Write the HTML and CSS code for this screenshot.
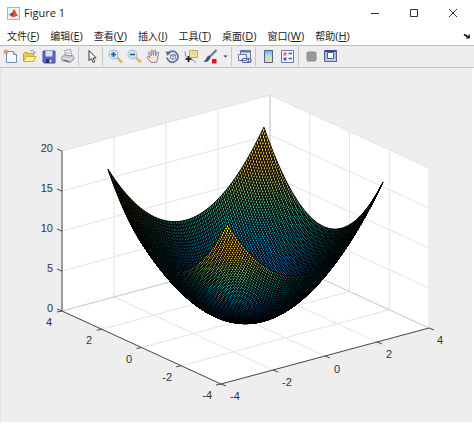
FILE: index.html
```html
<!DOCTYPE html>
<html lang="zh-CN">
<head>
<meta charset="utf-8">
<title>Figure 1</title>
<link rel="stylesheet" href="styles.css">
</head>
<body>
<header class="titlebar">
  <svg class="logo" viewBox="0 0 13 13" aria-hidden="true">
    <rect x=".5" y=".5" width="12" height="12" fill="#eef2f6" stroke="#a9b4c0"/>
    <path d="M1.5 7.8 4.6 6l1 1.5-1.5 1.3z" fill="#3b78a8"/>
    <path d="M4.6 6C6 5 6.500 2.500 7.400 2.200L6.500 8 5 10 4 8.800z" fill="#8c2f1c"/>
    <path d="M7.400 2.200C8.500 3 9.500 7 11.500 9.600 9.800 8.500 8.500 8.800 7 10.600L5 9.200C6.500 8 6.500 4 7.400 2.200z" fill="#dc5a22"/>
  </svg>
  <h1>Figure 1</h1>
  <div class="window-controls">
    <button aria-label="最小化"><svg viewBox="0 0 10 10"><path d="M1 5.500h8"/></svg></button>
    <button aria-label="最大化"><svg viewBox="0 0 10 10"><path d="M1.500 1.500h7v7h-7z"/></svg></button>
    <button aria-label="关闭"><svg viewBox="0 0 10 10"><path d="M1 1l8 8M9 1l-8 8"/></svg></button>
  </div>
</header>
<nav class="menubar">
  <button>文件<span>(<u>F</u>)</span></button>
  <button>编辑<span>(<u>E</u>)</span></button>
  <button>查看<span>(<u>V</u>)</span></button>
  <button>插入<span>(<u>I</u>)</span></button>
  <button>工具<span>(<u>T</u>)</span></button>
  <button>桌面<span>(<u>D</u>)</span></button>
  <button>窗口<span>(<u>W</u>)</span></button>
  <button>帮助<span>(<u>H</u>)</span></button>
  <button class="dock" aria-label="停靠"><svg viewBox="0 0 8 8"><path d="M1 2.500 4.500 4.500" stroke="#111" stroke-width="2"/><path d="M6.800 2v4.600H2.600z" fill="#111"/></svg></button>
</nav>
<div class="toolbar" role="toolbar">
  <button aria-label="新建"><svg viewBox="0 0 15 15"><path d="M3.500 2.500h7l3 3v8h-10z" fill="#f4f9ff" stroke="#6f8fb8"/><path d="M10.500 2.500v3h3" fill="#c8daf0" stroke="#6f8fb8"/><circle cx="3" cy="3" r="2" fill="#f2b183"/><path d="M3 0v6M0 3h6M1 1l4 4M5 1 1 5" stroke="#d98a5c" stroke-width=".7"/></svg></button>
  <button aria-label="打开"><svg viewBox="0 0 15 15"><path d="M1.500 12.500v-8l1-1h3l1 1h5v8z" fill="#edc750" stroke="#c79f3a"/><path d="M1.500 12.500 4 7.500h10l-2.500 5z" fill="#fff09a" stroke="#cfaa42"/><path d="M8 2.500c2-2 4-1 4.500 1" fill="none" stroke="#7c9cc2"/><path d="M11 3h3l-1.500 2z" fill="#7c9cc2"/></svg></button>
  <button aria-label="保存"><svg viewBox="0 0 15 15"><path d="M2 2h12v12H3l-1-1z" fill="#5a63c4" stroke="#4a50ac"/><path d="M4.500 2h7v5.500h-7z" fill="#d5e2fb"/><path d="M5 10h6v4H5z" fill="#2a2f70"/><path d="M8.500 10.500h2v3h-2z" fill="#eef"/></svg></button>
  <button aria-label="打印"><svg viewBox="0 0 15 15"><path d="m4.500 1.500 6-1 1.500 6-6 1z" fill="#fff" stroke="#98a3b1"/><path d="m6 3.500 4-.7M6.500 5l4-.7" stroke="#9aa7b7" stroke-width=".7"/><path d="m1.500 8.500 3-2.500 9 1 .5 3-4 3.500-8-2z" fill="#c4c8ce" stroke="#8b9199"/><path d="m2 9 8 1.500 3.500-3" fill="none" stroke="#edf0f3"/><path d="m3.500 11 5.500 1.500" stroke="#666" stroke-width="1.200"/></svg></button>
  <i class="sep"></i>
  <button aria-label="编辑绘图"><svg viewBox="0 0 15 15"><path d="M5 1.500v10.200l2.400-2.200 1.800 4 1.600-.8-1.800-3.700h3.200z" fill="#fff" stroke="#222" stroke-width=".9"/></svg></button>
  <i class="sep"></i>
  <button aria-label="放大"><svg viewBox="0 0 15 15"><path d="m9 8.500 5 5" stroke="#d9b572" stroke-width="2.500"/><circle cx="5.500" cy="5.500" r="4.500" fill="#c8e6f6" stroke="#98bcd6"/><path d="M3 5.500h5M5.500 3v5" stroke="#26568c" stroke-width="1.500"/></svg></button>
  <button aria-label="缩小"><svg viewBox="0 0 15 15"><path d="m9 8.500 5 5" stroke="#d9b572" stroke-width="2.500"/><circle cx="5.500" cy="5.500" r="4.500" fill="#c8e6f6" stroke="#98bcd6"/><path d="M3 5.500h5" stroke="#26568c" stroke-width="1.500"/></svg></button>
  <button aria-label="平移"><svg viewBox="0 0 15 15"><path d="M5 13.500 1.300 9c-.8-1.200.5-2 1.400-1.200L4 9 2.300 4.300c-.3-1.300 1.200-1.600 1.700-.5l1.500 3-.6-4.600c0-1.400 1.500-1.500 1.800-.2l.8 4.400.5-4.600c.3-1.200 1.700-1 1.700.2l-.1 4.900 1.500-3.500c.6-1 1.800-.5 1.600.6L11.500 10l-1 3.500z" fill="#fbe0cc" stroke="#7881ab" stroke-width=".9"/></svg></button>
  <button aria-label="三维旋转"><svg viewBox="0 0 15 15"><path d="M3.200 4.200A5.500 5.500 0 1 1 2 8.500" fill="none" stroke="#62769a" stroke-width="1.800"/><path d="M.5 2.500 6 3 2.500 7z" fill="#50658b"/><path d="m5.500 6 2.500-1 2.500 1v3.500l-2.500 1-2.500-1zm0 0 2.500 1 2.500-1M8 7v3.500" fill="#e6eef8" stroke="#62769a" stroke-width=".8"/></svg></button>
  <button aria-label="数据游标"><svg viewBox="0 0 15 15"><path d="M5.500 1.500h8v7h-8z" fill="#efe6a0" stroke="#b6aa60"/><path d="M7.500 3.500h4M7.500 5.500h4" stroke="#cfc47c" stroke-width=".7"/><path d="M1 2.500c0 4 1.500 7 4.500 7.500 3 .5 4.500 1 6.500 4" fill="none" stroke="#6f80c0"/><path d="M4.500 7v6M1.500 10h6" stroke="#111" stroke-width="1.600"/></svg></button>
  <button aria-label="刷亮"><svg viewBox="0 0 15 15"><path d="M13.500 1 6.500 8" stroke="#5876a5" stroke-width="2"/><path d="M7.500 7.500 5.500 6.500C3.500 8 3 11 .8 12.700c3 .8 6.200-.7 6.700-5.200z" fill="#46536c"/><path d="M9 10h4.500v4.500H9z" fill="#f20d19"/></svg></button>
  <button class="caret" aria-label="刷亮选项"><svg viewBox="0 0 5 5"><path d="M.5 1.500h4l-2 2z" fill="#333"/></svg></button>
  <i class="sep"></i>
  <button aria-label="链接绘图"><svg viewBox="0 0 15 15"><path d="M3.500 1.500h10v8h-10z" fill="#dce8f8" stroke="#6479ad"/><path d="M3.500 2.500h10" stroke="#6479ad" stroke-width="2"/><path d="M1.500 5.500h8v6h-8z" fill="#edf3fb" stroke="#6479ad"/><path d="M7 9.500h2.500a2 2 0 0 1 0 4H7a2 2 0 0 1 0-4zM10.500 9.500H12a2 2 0 0 1 0 4h-1.500" fill="none" stroke="#53648d" stroke-width="1.200"/></svg></button>
  <i class="sep"></i>
  <button aria-label="插入颜色栏"><svg viewBox="0 0 15 15"><defs><linearGradient id="bar" x2="0" y2="1"><stop stop-color="#6fb0e4"/><stop offset=".5" stop-color="#bce3d5"/><stop offset="1" stop-color="#f8dc83"/></linearGradient></defs><path d="M3.500 1.500h8v12h-8z" fill="url(#bar)" stroke="#51608c"/></svg></button>
  <button aria-label="插入图例"><svg viewBox="0 0 15 15"><path d="M1.500 1.500h12v12h-12z" fill="#f6f8ff" stroke="#6677a8"/><path d="M3.500 3.500h3v3h-3z" fill="#e06a62"/><path d="M3.500 8.500h3v3h-3z" fill="#4d65b9"/><path d="M8.500 4.500h3.500M8.500 9.500h3.500" stroke="#555d78" stroke-width="1.600"/></svg></button>
  <i class="sep"></i>
  <button aria-label="隐藏绘图工具"><svg viewBox="0 0 15 15"><rect x="3" y="3" width="9" height="9" rx="1" fill="#999" stroke="#8d8d8d"/></svg></button>
  <button aria-label="显示绘图工具"><svg viewBox="0 0 15 15"><path d="M1.500 1.500h12v11h-12z" fill="#a9bbdc" stroke="#50618f"/><path d="M2 2h11" stroke="#33498a" stroke-width="2"/><path d="M4.500 3.500h6v6h-6z" fill="#fff" stroke="#50618f"/><path d="M2 11h11" stroke="#cfdaee"/></svg></button>
</div>
<main class="figure">
  <svg id="plot" viewBox="1 68 471 354" role="img" aria-label="z = x² + y²">
    <path class="wall" d="M62 151 270 95 429 168V328L221 384 62 311z"/>
    <g id="grid" class="grid"></g>
    <g id="surface" class="surface"></g>
    <g id="axes" class="axes"></g>
    <g class="ticks">
      <g text-anchor="end">
        <text x="53" y="152">20</text><text x="53" y="192">15</text><text x="53" y="232">10</text><text x="53" y="272">5</text><text x="53" y="312">0</text>
        <text x="52" y="326">4</text><text x="92" y="344">2</text><text x="132" y="363">0</text><text x="172" y="381">-2</text><text x="212" y="399">-4</text>
      </g>
      <text x="230" y="400">-4</text><text x="282" y="386">-2</text><text x="334" y="373">0</text><text x="386" y="358">2</text><text x="437" y="344">4</text>
    </g>
  </svg>
</main>
<script src="plot.js"></script>
</body>
</html>
```
FILE: styles.css
```css
* { box-sizing: border-box; }
html, body { height: 100%; }
body {
  margin: 0;
  display: flex;
  flex-direction: column;
  background: #fff;
  color: #222;
  font-family: "Open Sans", "Noto Sans CJK SC", sans-serif;
}
button {
  display: flex;
  align-items: center;
  justify-content: center;
  padding: 0;
  border: 0;
  background: none;
  color: inherit;
  font: inherit;
}
.titlebar {
  display: flex;
  align-items: center;
  gap: 4px;
  height: 26px;
  padding: 0 2px 0 7px;
}
.logo { width: 13px; height: 13px; }
h1 { margin: 0; font-size: 11px; font-weight: 400; line-height: 16px; }
.window-controls { display: flex; margin-left: auto; }
.window-controls button { width: 39px; height: 26px; }
.window-controls svg { width: 10px; height: 10px; fill: none; stroke: #333; }
.menubar {
  display: flex;
  align-items: center;
  gap: 11px;
  height: 19px;
  padding: 0 3px 0 7px;
  font-size: 10px;
  line-height: 16px;
  white-space: nowrap;
}
.menubar span { font-size: 11px; }
.menubar u { text-underline-offset: 1px; }
.dock { margin-left: auto; }
.dock svg { width: 8px; height: 8px; }
.toolbar {
  display: flex;
  align-items: center;
  height: 23px;
  padding-left: 1px;
  border-top: 1px solid #bcbcbc;
  border-bottom: 1px solid #c4c4c4;
  background: #eee;
}
.toolbar button { width: 19px; height: 19px; }
.toolbar svg { width: 15px; height: 15px; fill: none; }
.toolbar .caret { width: 10px; }
.toolbar .caret svg { width: 5px; height: 5px; }
.sep { width: 1px; height: 19px; margin: 0 3px 0 1px; background: #c6c6c6; }
.figure {
  flex: 1;
  min-height: 0;
  margin: 0 2px 2px 0;
  border-left: 1px solid #e2e2e2;
  background: #eee;
}
.figure svg { display: block; width: 100%; height: 100%; }
.wall { fill: #fff; }
.grid { fill: none; stroke: #e4e4e4; stroke-width: 1px; }
.grid .edge { stroke: #cecece; }
.surface { stroke: #000; stroke-width: 1px; stroke-linejoin: round; }
.axes { fill: none; stroke: #4a4a4a; stroke-width: 1px; }
.ticks { fill: #333; font: 11px "Liberation Sans", sans-serif; }
```
FILE: plot.js
```js
const SVG = 'http://www.w3.org/2000/svg';

// Orthographic projection of a data point to figure coordinates.
const project = (x, y, z) => [
  245.5 + 26 * x - 19.875 * y,
  319.5 - 7 * x - 9.125 * y - 8 * z
];
const point = p => project(...p).map(v => v.toFixed(2)).join(' ');

function addPath(parent, d, attrs = {}) {
  const path = document.createElementNS(SVG, 'path');
  path.setAttribute('d', d);
  for (const key in attrs) path.setAttribute(key, attrs[key]);
  parent.appendChild(path);
}

const grid = document.getElementById('grid');
const polyline = (...pts) => 'M' + pts.map(point).join('L');
for (const t of [-4, -2, 0, 2, 4]) {
  addPath(grid, polyline([t, -4, 0], [t, 4, 0], [t, 4, 20]));
  addPath(grid, polyline([-4, t, 0], [4, t, 0], [4, t, 20]));
}
for (const z of [5, 10, 15, 20]) {
  addPath(grid, polyline([-4, 4, z], [4, 4, z], [4, -4, z]));
}
addPath(grid, polyline([-4, 4, 0], [4, 4, 0], [4, -4, 0]), { class: 'edge' });
addPath(grid, polyline([4, 4, 0], [4, 4, 20]), { class: 'edge' });

const COLOURS = [
  [53, 42, 135], [3, 99, 225], [10, 125, 205], [6, 155, 185], [45, 175, 145],
  [135, 180, 100], [220, 175, 65], [250, 190, 35], [249, 251, 14]
];
function colour(t) {
  const s = Math.min(t, 0.9999) * 8;
  const i = Math.floor(s);
  return 'rgb(' + COLOURS[i].map((v, k) => Math.round(v + (COLOURS[i + 1][k] - v) * (s - i))).join(',') + ')';
}

// Faces are drawn from the back corner forwards, so near ones cover far ones.
const surface = document.getElementById('surface');
const N = 100;
const STEP = 6 / N;
const height = (x, y) => x * x + y * y;
for (let i = N - 1; i >= 0; i--) {
  const x = -3 + i * STEP;
  for (let j = N - 1; j >= 0; j--) {
    const y = -3 + j * STEP;
    const corners = [[x, y], [x + STEP, y], [x + STEP, y + STEP], [x, y + STEP]]
      .map(([a, b]) => [a, b, height(a, b)]);
    addPath(surface, polyline(...corners) + 'z', { fill: colour(height(x, y) / 18) });
  }
}

const axes = document.getElementById('axes');
addPath(axes, polyline([-4, 4, 20], [-4, 4, 0], [-4, -4, 0], [4, -4, 0]));
for (const z of [0, 5, 10, 15, 20]) {
  addPath(axes, 'M' + point([-4, 4, z]) + 'l-5 -2');
}
for (const t of [-4, -2, 0, 2, 4]) {
  addPath(axes, 'M' + point([-4, t, 0]) + 'l-5 1');
  addPath(axes, 'M' + point([t, -4, 0]) + 'l5 2');
}
```
